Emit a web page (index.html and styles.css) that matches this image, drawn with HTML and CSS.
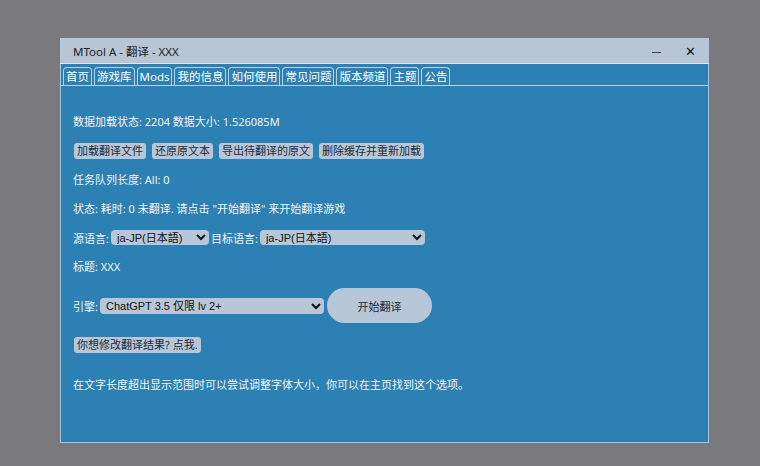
FILE: index.html
```html
<!DOCTYPE html>
<html lang="zh">
<head>
   <meta charset="UTF-8">
   <title>MTool A - 翻译 - XXX</title>
   <link rel="stylesheet" href="styles.css">
</head>
<body>
   <div class="window">
      <div class="titlebar">
         <span class="title">MTool A - 翻译 - XXX</span>
         <span class="winbtn"><span class="dash"></span></span>
         <span class="winbtn close">✕</span>
      </div>

      <!-- 标签栏 -->
      <div class="tabs">
         <span class="tab">首页</span>
         <span class="tab">游戏库</span>
         <span class="tab">Mods</span>
         <span class="tab">我的信息</span>
         <span class="tab">如何使用</span>
         <span class="tab">常见问题</span>
         <span class="tab">版本频道</span>
         <span class="tab">主题</span>
         <span class="tab">公告</span>
      </div>

      <div class="content">
         <p class="line first">数据加载状态: 2204 数据大小: 1.526085M</p>

         <div class="btnrow">
            <button class="btn">加载翻译文件</button>
            <button class="btn">还原原文本</button>
            <button class="btn">导出待翻译的原文</button>
            <button class="btn">删除缓存并重新加载</button>
         </div>

         <p class="line">任务队列长度: All: 0</p>
         <p class="line">状态: 耗时: 0 未翻译. 请点击 "开始翻译" 来开始翻译游戏</p>

         <div class="langrow">
            <span>源语言:</span>
            <select class="sel src"><option>ja-JP(日本語)</option></select>
            <span>目标语言:</span>
            <select class="sel dst"><option>ja-JP(日本語)</option></select>
         </div>

         <p class="line">标题: XXX</p>

         <div class="enginerow">
            <span>引擎:</span>
            <select class="sel engine"><option>ChatGPT 3.5 仅限 lv 2+</option></select>
            <button class="startbtn">开始翻译</button>
         </div>

         <button class="btn edit">你想修改翻译结果? 点我.</button>

         <p class="line tip">在文字长度超出显示范围时可以尝试调整字体大小，你可以在主页找到这个选项。</p>
      </div>
   </div>
</body>
</html>
```

FILE: styles.css
```css
body {
   margin: 0;
   padding: 38px 0 0 60px;
   background-color: #7a797d;
   font-family: "Noto Sans", "Noto Sans CJK SC", sans-serif;
   font-size: 11px;
}

.window {
   width: 649px;
   height: 405px;
   display: flex;
   flex-direction: column;
   background-color: #2c80b3;
   box-sizing: border-box;
   border: 1px solid #a9c6dc;
   border-top: none;
}

.titlebar {
   height: 25px;
   background-color: #b6c6d6;
   display: flex;
   align-items: center;
   padding-left: 13px;
   border-bottom: 1px solid #dfe8ef;
   color: #222;
   margin: 0 -1px;
}

.title {
   flex: 1;
   font-size: 11.5px;
}

.winbtn {
   width: 34px;
   display: flex;
   justify-content: center;
   color: #111;
}

.dash {
   width: 9px;
   height: 1px;
   background-color: #444;
   margin-top: 4px;
}

.close {
   font-size: 13px;
   margin-right: 2px;
}

.tabs {
   display: flex;
   gap: 2px;
   padding: 3px 0 0 2px;
   border-bottom: 1px solid #b7d2e6;
}

.tab {
   color: #fff;
   font-size: 11.5px;
   border: 1px solid #b7d2e6;
   border-bottom: none;
   border-radius: 4px 4px 0 0;
   padding: 0 2px;
   height: 17px;
   line-height: 17px;
}

.content {
   padding: 0 12px;
   color: #f2f4f6;
}

.line {
   margin: 0;
   height: 29px;
   line-height: 29px;
}

.first {
   margin-top: 21px;
}

.btnrow {
   display: flex;
   gap: 6px;
   padding: 7px 0 6px 1px;
}

.btn {
   font-family: "Noto Sans", "Noto Sans CJK SC", sans-serif;
   font-size: 11px;
   color: #1e2a36;
   background-color: #b7c7d7;
   border: none;
   border-radius: 3px;
   height: 16px;
   line-height: 16px;
   padding: 0 3px;
}

.langrow, .enginerow {
   display: flex;
   align-items: center;
   gap: 2px;
}

.langrow {
   height: 29px;
}

.sel {
   font-family: "Liberation Sans", "Noto Sans CJK SC", sans-serif;
   font-size: 11px;
   color: #111;
   background-color: #b7c7d7;
   border: none;
   border-radius: 4px;
   height: 15px;
   padding: 0 2px;
}

.src {
   width: 98px;
}

.dst {
   width: 165px;
}

.enginerow {
   margin-top: 7px;
}

.engine {
   width: 224px;
   height: 16px;
}

.startbtn {
   font-family: "Noto Sans", "Noto Sans CJK SC", sans-serif;
   font-size: 11px;
   color: #1e2a36;
   background-color: #b7c7d7;
   border: none;
   border-radius: 18px;
   width: 105px;
   height: 35px;
   margin-left: 1px;
}

.edit {
   margin: 14px 0 0 1px;
}

.tip {
   margin-top: 17px;
}
```
